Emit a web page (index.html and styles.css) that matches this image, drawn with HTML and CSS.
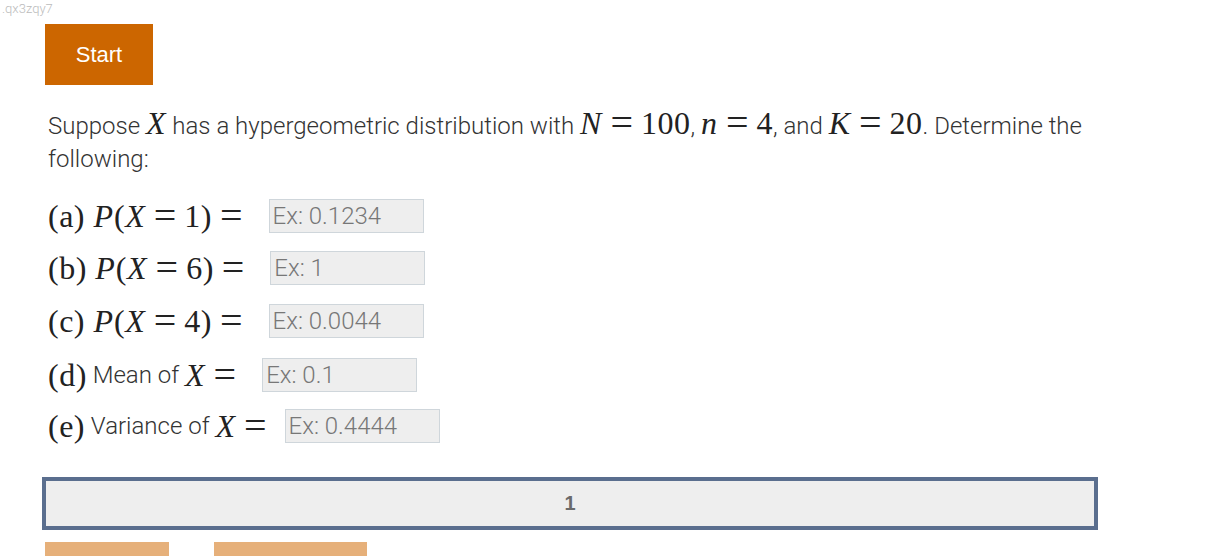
FILE: index.html
```html
<!DOCTYPE html>
<html>
<head>
<meta charset="utf-8">
<link rel="stylesheet" href="styles.css">
</head>
<body>
<div class="tag">.qx3zqy7</div>
<main class="wrap">
  <button class="start">Start</button>
  <p class="q">Suppose <span class="m"><i>X</i></span> has a hypergeometric distribution with <span class="m"><i>N</i><span class="eq">=</span>100</span>, <span class="m"><i>n</i><span class="eq">=</span>4</span>, and <span class="m"><i>K</i><span class="eq">=</span>20</span>. Determine the following:</p>
  <div class="rows">
    <div class="row"><span class="m">(a) <i>P</i>(<i>X</i><span class="eq">=</span>1)<span class="eq">=</span></span><input class="ans" placeholder="Ex: 0.1234"></div>
    <div class="row"><span class="m">(b) <i>P</i>(<i>X</i><span class="eq">=</span>6)<span class="eq">=</span></span><input class="ans" placeholder="Ex: 1"></div>
    <div class="row"><span class="m">(c) <i>P</i>(<i>X</i><span class="eq">=</span>4)<span class="eq">=</span></span><input class="ans" placeholder="Ex: 0.0044"></div>
    <div class="row"><span class="m">(d)</span><span class="txt">&nbsp;Mean of&nbsp;</span><span class="m"><i>X</i><span class="eq">=</span></span><input class="ans" placeholder="Ex: 0.1"></div>
    <div class="row row-e"><span class="m">(e)</span><span class="txt">&nbsp;Variance of&nbsp;</span><span class="m"><i>X</i><span class="eq">=</span></span><input class="ans" placeholder="Ex: 0.4444"></div>
  </div>
  <div class="progress">1</div>
  <div class="btns"><span class="nav n1"></span><span class="nav n2"></span></div>
</main>
</body>
</html>
```
FILE: styles.css
```css
html, body { margin: 0; padding: 0; background: #fff; }
body { font-family: Roboto, "Liberation Sans", sans-serif; color: #333; overflow: hidden; height: 556px; }
.tag { font-size: 13px; color: #bbb; font-weight: 300; line-height: 18px; padding-left: 2px; height: 18px; }
.wrap { padding-left: 45px; width: 1056px; }
.start { display: block; margin-top: 6px; width: 108px; height: 61px; background: #cc6600; color: #fff; border: 0; font-family: "Liberation Sans", Arial, sans-serif; font-size: 22px; padding: 0; }
.q { margin: 25px 0 0 3px; font-size: 24px; font-weight: 300; line-height: 33px; color: #333; width: 1050px; }
.m { font-family: "Liberation Serif", "Times New Roman", serif; font-size: 32px; letter-spacing: 0.5px; color: #222; font-weight: 400; white-space: nowrap; line-height: 0; }
.m i { font-style: italic; letter-spacing: 1px; }
.eq { font-size: 40px; margin: 0 8px; letter-spacing: 0; vertical-align: -2px; line-height: 0; }
.rows { margin: 23px 0 0 3px; display: flex; flex-direction: column; gap: 19px; }
.row { display: flex; align-items: center; height: 34px; }
.row .m { line-height: 34px; }
.row:nth-child(2) { margin-top: -1px; }
.row:nth-child(4) { margin-top: 1px; }
.row:nth-child(5) { margin-top: -2px; }
.txt { font-size: 24px; font-weight: 300; color: #333; }
.ans { box-sizing: border-box; width: 155px; height: 34px; background: #eee; border: 1px solid #cfd6db; font-family: Roboto, sans-serif; font-size: 24px; font-weight: 300; padding: 0 3px; margin-left: 18px; color: #333; }
.row-e .ans { margin-left: 10px; }
.ans::placeholder { color: #777; }
.progress { box-sizing: border-box; margin: 34px 0 0 -3px; width: 1056px; height: 53px; border: 4px solid #5a6e8e; background: #eee; text-align: center; font-family: "Liberation Sans", Arial, sans-serif; font-weight: 700; font-size: 20px; line-height: 45px; color: #6a6a6a; }
.btns { display: flex; gap: 45px; margin-top: 12px; }
.nav { display: block; height: 30px; background: #e6b07a; }
.n1 { width: 124px; }
.n2 { width: 153px; }
```
